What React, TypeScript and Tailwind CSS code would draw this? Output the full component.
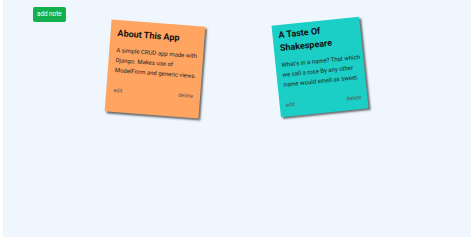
import React from "react";

type Note = {
  title: string;
  lines: string[];
};

function StickyNote({
  title,
  lines,
  className,
}: Note & { className: string }) {
  return (
    <div className={className}>
      <h2 className="text-[9px] leading-[13px] font-bold text-[#111] font-['Roboto',sans-serif]">
        {title}
      </h2>
      <p className="mt-[5px] whitespace-nowrap text-[6px] leading-[10px] text-[#222] font-['Roboto',sans-serif]">
        {lines.map((l, i) => (
          <React.Fragment key={i}>
            {l}
            {i < lines.length - 1 && <br />}
          </React.Fragment>
        ))}
      </p>
      <div className="mt-[10px] flex justify-between text-[5.5px] leading-[10px] text-[#555] font-['Roboto',sans-serif]">
        <span>edit</span>
        <span>delete</span>
      </div>
    </div>
  );
}

export default function App() {
  return (
    <div className="w-full h-[240px] bg-white">
      <div className="mx-[3px] h-[237px] bg-[#eff6fd] pt-[7px] flex flex-col">
        <div className="ml-[30px] flex">
          <button className="h-[15px] px-[4px] rounded-[2px] bg-[#12b04f] text-white text-[6.3px] leading-[15px] font-['Roboto',sans-serif]">
            add note
          </button>
        </div>
        <div className="flex items-start">
          <StickyNote
            title="About This App"
            lines={[
              "A simple CRUD app made with",
              "Django. Makes use of",
              "ModelForm and generic views.",
            ]}
            className="ml-[105px] mt-[1px] w-[94px] h-[92px] px-[7px] pt-[7px] bg-[#ffa561] rotate-[4.3deg] shadow-[2px_2px_2px_rgba(0,0,0,0.55)]"
          />
          <StickyNote
            title="A Taste Of Shakespeare"
            lines={[
              "What's in a name? That which",
              "we call a rose By any other",
              "name would smell as sweet.",
            ]}
            className="ml-[74px] mt-[-1px] w-[88px] h-[92px] px-[6px] pt-[4px] bg-[#1bcfc6] rotate-[-5.9deg] shadow-[2px_2px_2px_rgba(0,0,0,0.55)]"
          />
        </div>
      </div>
    </div>
  );
}
